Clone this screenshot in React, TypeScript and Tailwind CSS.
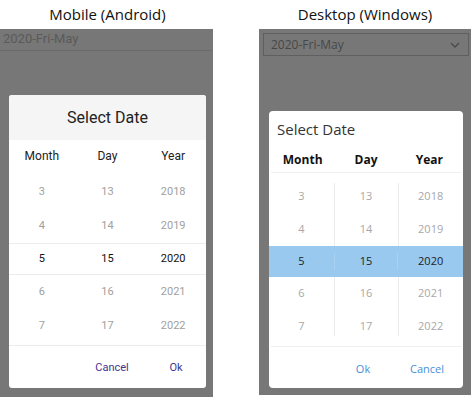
import React from 'react';

const rows = [
  { m: '3', d: '13', y: '2018' },
  { m: '4', d: '14', y: '2019' },
  { m: '5', d: '15', y: '2020', selected: true },
  { m: '6', d: '16', y: '2021' },
  { m: '7', d: '17', y: '2022' },
];

function MobilePicker() {
  return (
    <div className="flex w-[215px] flex-col">
      <div className="flex h-[29px] items-center justify-center text-[15px] text-[#111]" style={{ fontFamily: '"Open Sans", sans-serif' }}>
        Mobile (Android)
      </div>
      <div className="flex h-[368px] w-[213px] flex-col bg-[#777777]" style={{ fontFamily: 'Roboto, sans-serif' }}>
        <div className="mr-[2px] flex h-[22px] items-end border-b border-[#6a6a6a] pb-[2px] pl-[3px] text-[13px] text-[#5a5a5a]">
          2020-Fri-May
        </div>
        <div className="ml-[9px] mt-[44px] flex h-[293px] w-[197px] flex-col overflow-hidden rounded-[3px] bg-white">
          <div className="flex h-[45px] items-center justify-center bg-[#f5f5f5] text-[16px] text-[#222]">Select Date</div>
          <div className="grid h-[35px] grid-cols-3 items-center pb-[3px] text-center text-[12px] text-[#222]">
            <div>Month</div>
            <div>Day</div>
            <div>Year</div>
          </div>
          <div className="flex flex-col">
            {rows.map((r) => (
              <div
                key={r.m}
                className={
                  r.selected
                    ? 'grid h-[32px] grid-cols-3 items-center border-y border-[#ececec] text-center text-[11px] text-[#111]'
                    : 'grid h-[34px] grid-cols-3 items-center text-center text-[11px] text-[#a0a0a0]'
                }
              >
                <div>{r.m}</div>
                <div>{r.d}</div>
                <div>{r.y}</div>
              </div>
            ))}
          </div>
          <div className="mt-[2px] flex h-[42px] items-center border-t border-[#ececec] pt-[4px] text-[11px] text-[#43338f]">
            <div className="ml-[80px] w-[46px] text-center">Cancel</div>
            <div className="ml-[26px] w-[30px] text-center">Ok</div>
          </div>
        </div>
      </div>
    </div>
  );
}

function DesktopPicker() {
  return (
    <div className="ml-[44px] flex w-[212px] flex-col" style={{ fontFamily: '"Open Sans", sans-serif' }}>
      <div className="flex h-[29px] items-center justify-center text-[15px] text-[#111]">Desktop (Windows)</div>
      <div className="flex h-[366px] w-[212px] flex-col bg-[#777777] pt-[4px]">
        <div className="ml-[4px] flex h-[23px] w-[206px] items-center justify-between border border-[#5f5f5f] pl-[7px] pr-[8px] text-[12px] text-[#474747]">
          <span>2020-Fri-May</span>
          <svg width="10" height="6" viewBox="0 0 10 6" fill="none">
            <path d="M1 1l4 4 4-4" stroke="#4a4a4a" strokeWidth="1.3" />
          </svg>
        </div>
        <div className="ml-[10px] mt-[55px] flex h-[277px] w-[194px] flex-col rounded-[4px] bg-white">
          <div className="flex h-[36px] items-end pb-[7px] pl-[8px] text-[15px] text-[#333]">Select Date</div>
          <div className="mx-[2px] grid h-[26px] grid-cols-3 items-center border-b border-[#efefef] text-center text-[12px] font-bold text-[#111]">
            <div>Month</div>
            <div>Day</div>
            <div>Year</div>
          </div>
          <div className="relative mt-[7px] flex flex-col">
            <div className="pointer-events-none absolute left-[65px] top-[3px] h-[153px] w-px bg-[#ececec]" />
            <div className="pointer-events-none absolute left-[129px] top-[3px] h-[153px] w-px bg-[#ececec]" />
            {rows.map((r) => (
              <div
                key={r.m}
                className={
                  r.selected
                    ? 'relative grid h-[31px] grid-cols-3 items-center bg-[#99c9ef] text-center text-[11px] text-[#222]'
                    : 'grid h-[33px] grid-cols-3 items-center text-center text-[11px] text-[#a8a8a8]'
                }
              >
                <div>{r.m}</div>
                <div className={r.selected ? 'border-x border-[#a9d2f2]' : ''}>{r.d}</div>
                <div>{r.y}</div>
              </div>
            ))}
          </div>
          <div className="mx-[2px] mt-[3px] flex h-[41px] items-center border-t border-[#efefef] pt-[4px] text-[11px] text-[#4a8fd8]">
            <div className="ml-[78px] w-[28px] text-center">Ok</div>
            <div className="ml-[28px] w-[44px] text-center">Cancel</div>
          </div>
        </div>
      </div>
    </div>
  );
}

export default function App() {
  return (
    <div className="flex h-[401px] w-[474px] bg-white">
      <MobilePicker />
      <DesktopPicker />
    </div>
  );
}
